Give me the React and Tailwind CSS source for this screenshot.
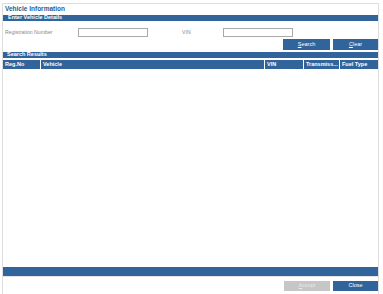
export default function App() {
  const cols = [
    { name: "Reg.No", w: "w-[37px]" },
    { name: "Vehicle", w: "w-[224px]" },
    { name: "VIN", w: "w-[39px]" },
    { name: "Transmiss...", w: "w-[36px]" },
    { name: "Fuel Type", w: "flex-1" },
  ];

  return (
    <div className="w-[383px] h-[294px] bg-white overflow-hidden font-['Liberation_Sans',Arial,sans-serif]">
      <div className="ml-[2px] mt-[3px] w-[377px] h-[291px] border-l border-t border-r border-[#dedede] flex flex-col">
        <div className="h-[11px] pl-[2px] flex items-center text-[6.5px] font-bold text-[#2b5d93] leading-none">
          Vehicle Information
        </div>

        <div className="h-[6px] bg-[#30649a] pl-[5px] flex items-center text-[5.5px] font-bold text-white leading-none">
          Enter Vehicle Details
        </div>

        <div className="flex items-center h-[9px] mt-[7px]">
          <div className="w-[75px] pl-[2px] text-[5.2px] text-[#8a8a8a] leading-none">Registration Number</div>
          <input className="w-[70px] h-[9px] border border-[#a9a9a9] bg-white outline-none" />
          <div className="w-[34px]" />
          <div className="w-[41px] text-[5.2px] text-[#8a8a8a] leading-none">VIN</div>
          <input className="w-[70px] h-[9px] border border-[#a9a9a9] bg-white outline-none" />
        </div>

        <div className="flex justify-end gap-[3px] mt-[2px]">
          <button className="w-[47px] h-[11px] bg-[#30649a] text-white text-[5.5px] leading-none">
            <span className="underline">S</span>earch
          </button>
          <button className="w-[45px] h-[11px] bg-[#30649a] text-white text-[5.5px] leading-none">
            <span className="underline">C</span>lear
          </button>
        </div>

        <div className="h-[6px] mt-[2px] bg-[#30649a] pl-[4px] flex items-center text-[5.5px] font-bold text-white leading-none">
          Search Results
        </div>

        <div className="h-[9px] mt-[2px] bg-[#30649a] flex">
          {cols.map((c, i) => (
            <div
              key={c.name}
              className={`${c.w} flex items-center pl-[2px] text-[5.5px] font-bold text-white leading-none ${
                i > 0 ? "border-l border-white" : ""
              }`}
            >
              {c.name}
            </div>
          ))}
        </div>

        <div className="h-[198px] bg-white" />

        <div className="h-[9px] bg-[#30649a] border-b border-[#e4e4e4] box-content" />

        <div className="flex justify-end gap-[3px] mt-[4px]">
          <button className="w-[46px] h-[10px] bg-[#c6c6c6] text-[#e9e9e9] text-[5.5px] leading-none" disabled>
            <span className="underline">A</span>ccept
          </button>
          <button className="w-[45px] h-[10px] bg-[#30649a] text-white text-[5.5px] leading-none">
            Close
          </button>
        </div>
      </div>
    </div>
  );
}
